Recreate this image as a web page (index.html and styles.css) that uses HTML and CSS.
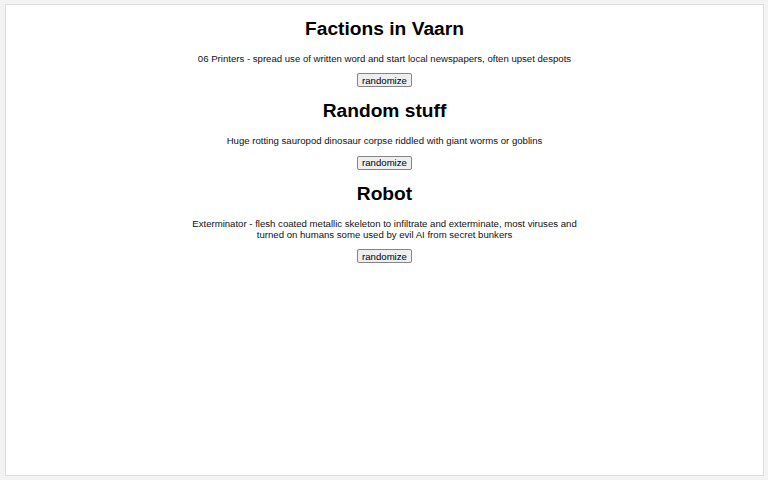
FILE: index.html
```html
<!DOCTYPE html>
<html lang="en">
<head>
    <meta charset="UTF-8">
    <meta name="viewport" content="width=device-width, initial-scale=1.0">
    <title>Vaarn Tables</title>
    <link rel="stylesheet" href="styles.css">
</head>
<body>
    <div class="page">
        <div class="table_box">
            <h1>Factions in Vaarn</h1>
            <p class="result">06 Printers - spread use of written word and start local newspapers, often upset despots</p>
            <div><button type="button" class="btn_random">randomize</button></div>
        </div>

        <div class="table_box">
            <h1>Random stuff</h1>
            <p class="result">Huge rotting sauropod dinosaur corpse riddled with giant worms or goblins</p>
            <div><button type="button" class="btn_random">randomize</button></div>
        </div>

        <div class="table_box">
            <h1>Robot</h1>
            <p class="result">Exterminator - flesh coated metallic skeleton to infiltrate and exterminate, most viruses and turned on humans some used by evil AI from secret bunkers</p>
            <div><button type="button" class="btn_random">randomize</button></div>
        </div>
    </div>
</body>
</html>
```

FILE: styles.css
```css
html, body {
    margin: 0;
    height: 100%;
}
body {
    box-sizing: border-box;
    padding: 4px 4px;
    background-color: #f3f3f3;
    font-family: "Liberation Sans", Arial, sans-serif;
    font-size: 9.6px;
    color: #111;
}
.page {
    box-sizing: border-box;
    height: 100%;
    margin: 0 0 0 1px;
    border: 1px solid #dcdcdc;
    background-color: #fff;
    text-align: center;
    overflow: hidden;
}
h1 {
    font-size: 19.2px;
    margin: 12.9px 0;
    color: #000;
}
.result {
    max-width: 392px;
    margin: 9.6px auto;
}
.btn_random {
    font-family: "Liberation Sans", Arial, sans-serif;
    font-size: 9.6px;
    height: 14px;
    padding: 0 4px;
    color: #000;
    background-color: #efefef;
    border: 1px solid #858585;
    border-radius: 2px;
}
```
